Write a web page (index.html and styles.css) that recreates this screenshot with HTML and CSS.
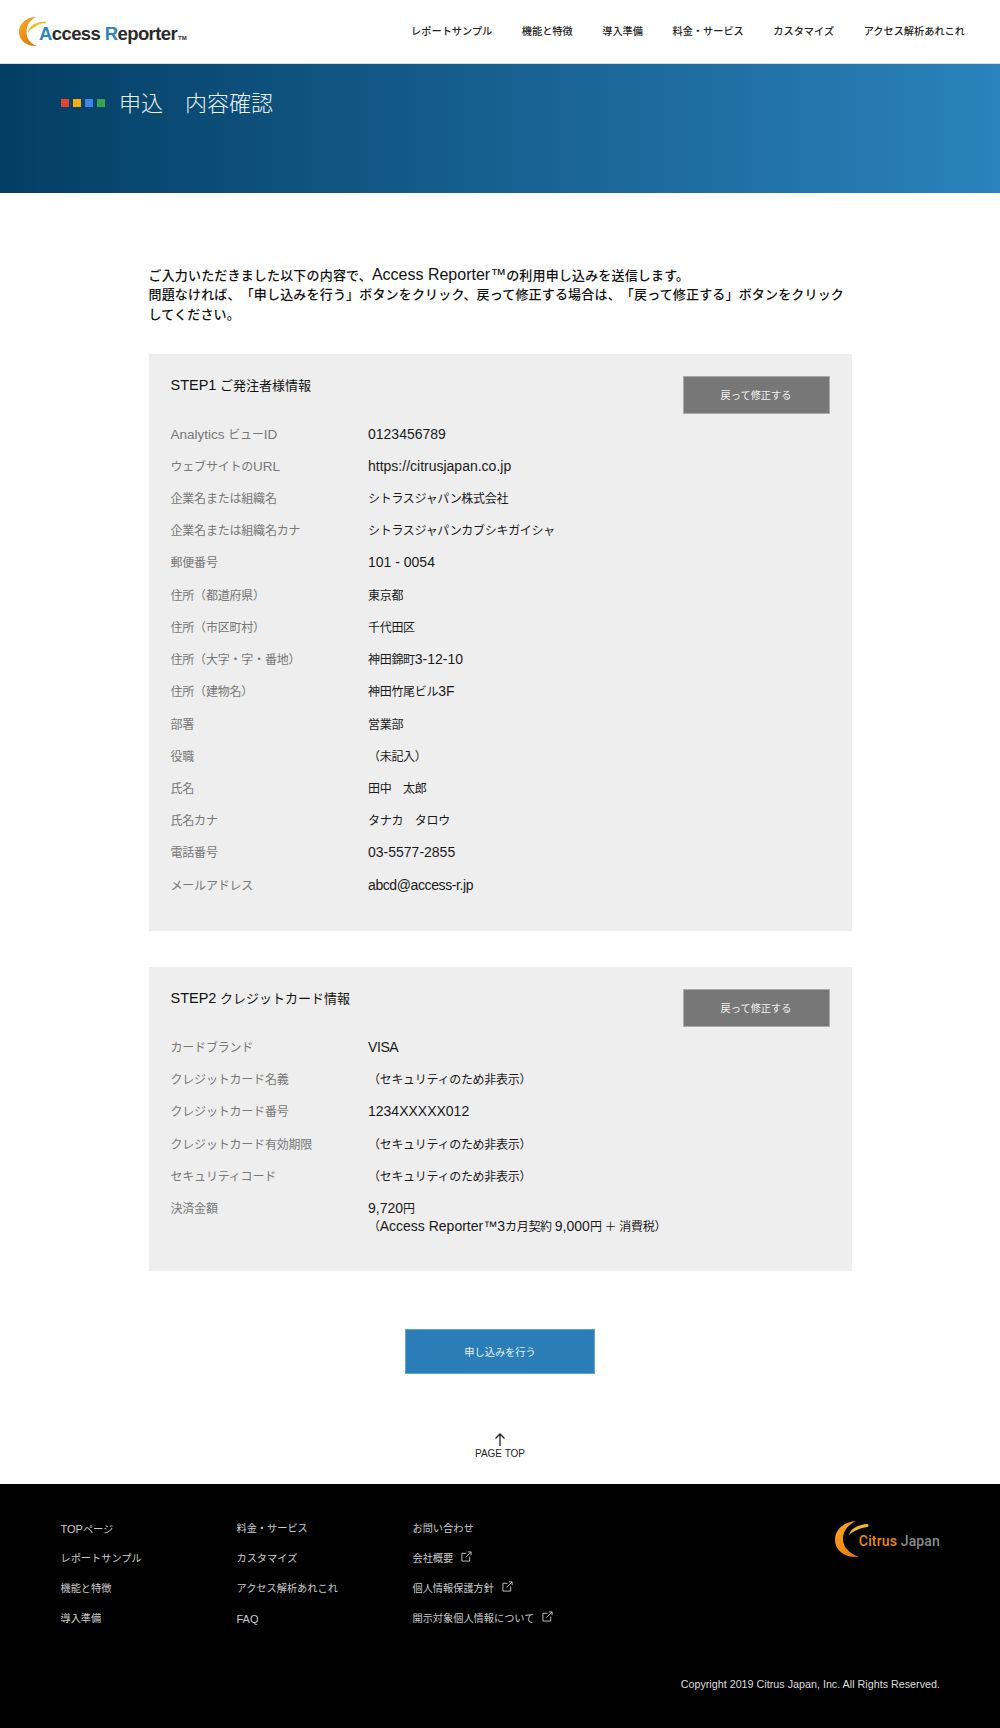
FILE: index.html
```html
<!DOCTYPE html>
<html lang="ja">
<head>
<meta charset="utf-8">
<title>申込 内容確認</title>
<link rel="stylesheet" href="styles.css">
</head>
<body>
<header class="site-header">
  <a class="brand" href="#">
    <svg class="brand-mark" viewBox="0 0 30 32" width="30" height="32">
      <defs><linearGradient id="og" x1="0.2" y1="0" x2="0.8" y2="1"><stop offset="0" stop-color="#f8a91f"/><stop offset="1" stop-color="#e5720e"/></linearGradient></defs>
      <path d="M18 1C8 1 1 8 1 16c0 8 7 14.500 18 14C12 28 8.500 22 8.500 16 8.500 9 12 4 18 1z" fill="url(#og)"/>
      <path d="M10 16c1-5 6-10 17-10.500 1.500 0 1.500 1.500 0 2-6 0-8 2-10 3.500-3 1-5 3-7 5z" fill="#f4bc22"/>
    </svg>
    <span class="brand-text"><span class="cap">A</span>ccess <span class="cap">R</span>eporter<small>TM</small></span>
  </a>
  <nav class="main-nav">
    <a href="#">レポートサンプル</a>
    <a href="#">機能と特徴</a>
    <a href="#">導入準備</a>
    <a href="#">料金・サービス</a>
    <a href="#">カスタマイズ</a>
    <a href="#">アクセス解析あれこれ</a>
  </nav>
</header>
<section class="banner">
  <div class="squares"><i class="s1"></i><i class="s2"></i><i class="s3"></i><i class="s4"></i></div>
  <h1>申込　内容確認</h1>
</section>
<main class="content">
  <p class="intro">ご入力いただきました以下の内容で、<span class="l">Access Reporter™</span>の利用申し込みを送信します。<br>問題なければ、「申し込みを行う」ボタンをクリック、戻って修正する場合は、「戻って修正する」ボタンをクリックしてください。</p>
  <section class="panel">
    <div class="panel-head"><h2><span class="l">STEP1</span> ご発注者様情報</h2><a class="back" href="#">戻って修正する</a></div>
    <dl class="rows">
      <div><dt><span class="l">Analytics </span>ビュー<span class="l">ID</span></dt><dd><span class="l">0123456789</span></dd></div>
      <div><dt>ウェブサイトの<span class="l">URL</span></dt><dd><span class="l">https://citrusjapan.co.jp</span></dd></div>
      <div><dt>企業名または組織名</dt><dd>シトラスジャパン株式会社</dd></div>
      <div><dt>企業名または組織名カナ</dt><dd>シトラスジャパンカブシキガイシャ</dd></div>
      <div><dt>郵便番号</dt><dd><span class="l">101 - 0054</span></dd></div>
      <div><dt>住所（都道府県）</dt><dd>東京都</dd></div>
      <div><dt>住所（市区町村）</dt><dd>千代田区</dd></div>
      <div><dt>住所（大字・字・番地）</dt><dd>神田錦町<span class="l">3-12-10</span></dd></div>
      <div><dt>住所（建物名）</dt><dd>神田竹尾ビル<span class="l">3F</span></dd></div>
      <div><dt>部署</dt><dd>営業部</dd></div>
      <div><dt>役職</dt><dd>（未記入）</dd></div>
      <div><dt>氏名</dt><dd>田中　太郎</dd></div>
      <div><dt>氏名カナ</dt><dd>タナカ　タロウ</dd></div>
      <div><dt>電話番号</dt><dd><span class="l">03-5577-2855</span></dd></div>
      <div><dt>メールアドレス</dt><dd><span class="l tight">abcd@access-r.jp</span></dd></div>
    </dl>
  </section>
  <section class="panel panel-pay">
    <div class="panel-head"><h2><span class="l">STEP2</span> クレジットカード情報</h2><a class="back" href="#">戻って修正する</a></div>
    <dl class="rows">
      <div><dt>カードブランド</dt><dd><span class="l tight">VISA</span></dd></div>
      <div><dt>クレジットカード名義</dt><dd>（セキュリティのため非表示）</dd></div>
      <div><dt>クレジットカード番号</dt><dd><span class="l">1234XXXXX012</span></dd></div>
      <div><dt>クレジットカード有効期限</dt><dd>（セキュリティのため非表示）</dd></div>
      <div><dt>セキュリティコード</dt><dd>（セキュリティのため非表示）</dd></div>
      <div><dt>決済金額</dt><dd><span class="l">9,720</span>円<br>（<span class="l">Access Reporter™3</span>カ月契約 <span class="l">9,000</span>円 ＋ 消費税）</dd></div>
    </dl>
  </section>
  <div class="submit-wrap"><a class="submit" href="#">申し込みを行う</a></div>
  <a class="page-top" href="#">
    <svg viewBox="0 0 12 13" width="12" height="13"><path d="M6 13V1M1.500 5.500L6 1l4.500 4.500" fill="none" stroke="#222" stroke-width="1.300"/></svg>
    <span>PAGE TOP</span>
  </a>
</main>
<footer class="site-footer">
  <div class="foot-top">
    <ul>
      <li><a href="#"><span class="f">TOP</span>ページ</a></li>
      <li><a href="#">レポートサンプル</a></li>
      <li><a href="#">機能と特徴</a></li>
      <li><a href="#">導入準備</a></li>
    </ul>
    <ul>
      <li><a href="#">料金・サービス</a></li>
      <li><a href="#">カスタマイズ</a></li>
      <li><a href="#">アクセス解析あれこれ</a></li>
      <li><a href="#"><span class="f">FAQ</span></a></li>
    </ul>
    <ul>
      <li><a href="#">お問い合わせ</a></li>
      <li><a href="#">会社概要<svg class="ext" viewBox="0 0 12 12"><path d="M6 2.500H1V11h8.500V6M5 7l6-6M7.500 1H11v3.500" fill="none" stroke="#ccc"/></svg></a></li>
      <li><a href="#">個人情報保護方針<svg class="ext" viewBox="0 0 12 12"><path d="M6 2.500H1V11h8.500V6M5 7l6-6M7.500 1H11v3.500" fill="none" stroke="#ccc"/></svg></a></li>
      <li><a href="#">開示対象個人情報について<svg class="ext" viewBox="0 0 12 12"><path d="M6 2.500H1V11h8.500V6M5 7l6-6M7.500 1H11v3.500" fill="none" stroke="#ccc"/></svg></a></li>
    </ul>
    <a class="citrus" href="#">
      <svg viewBox="0 0 34 38" width="34" height="38">
        <defs><linearGradient id="og2" x1="0.2" y1="0" x2="0.8" y2="1"><stop offset="0" stop-color="#f9a81f"/><stop offset="1" stop-color="#e9780f"/></linearGradient></defs>
        <path d="M21 1C8 2 0 10 0 20c0 10 9 18 24 17C14 33 8 27 8 19 8 11 13 5 21 1z" fill="url(#og2)"/>
        <path d="M14 15c1-5 7-10 18-11 2 0 2 3 0 3-6 1-8 2-10 3-3 1-6 3-8 5z" fill="#f5b921"/>
      </svg>
      <span class="citrus-text"><b>Citrus</b> Japan</span>
    </a>
  </div>
  <p class="copyright">Copyright 2019 Citrus Japan, Inc. All Rights Reserved.</p>
</footer>
</body>
</html>
```
FILE: styles.css
```css
* { box-sizing: border-box; }
html, body { margin: 0; padding: 0; }
body {
  font-family: "Liberation Sans", "Noto Sans CJK JP", sans-serif;
  color: #222;
  background: #fff;
  text-spacing-trim: space-all;
}
a { color: inherit; text-decoration: none; }

.site-header {
  height: 64px;
  display: flex;
  align-items: center;
  justify-content: space-between;
  padding: 0 35px 0 18px;
  border-bottom: 1px solid #d5dde2;
}
.brand { display: flex; align-items: center; }
.brand-mark { flex: none; margin-top: 0; }
.brand-text {
  margin-left: -9px;
  margin-top: 4px;
  font-size: 18.500px;
  font-weight: 700;
  letter-spacing: -.6px;
  color: #2b2b2b;
  white-space: nowrap;
}
.brand-text .cap { color: #2b85c0; }
.brand-text small { font-size: 6px; margin-left: 1px; letter-spacing: 0; }
.main-nav { display: flex; gap: 29.500px; font-size: 10.200px; font-weight: 500; margin-top: -2px; }

.banner {
  height: 129px;
  background: linear-gradient(90deg, #033e64 0%, #2b82bc 100%);
  display: flex;
  align-items: flex-start;
  padding: 25px 0 0 61px;
  color: #eaf2f8;
}
.squares { display: flex; gap: 4px; margin-top: 10px; }
.squares i { width: 8px; height: 8px; display: block; }
.s1 { background: #e8432f; }
.s2 { background: #f5ae0b; }
.s3 { background: #4285e8; }
.s4 { background: #35a54e; }
.banner h1 {
  margin: 0 0 0 14px;
  font-size: 22px;
  font-weight: 300;
  line-height: 30px;
}

.content { width: 703px; margin: 0 auto; }
.intro {
  margin: 73px 0 30px;
  font-size: 13px;
  letter-spacing: .17px;
  font-weight: 500;
  line-height: 19.400px;
  color: #111;
}
.l { font-size: 14px; line-height: 1; letter-spacing: 0; }
.l.tight { letter-spacing: -.4px; }
.intro .l { font-size: 16px; }
.panel {
  background: #eee;
  padding: 22px 22px 28px;
  margin-bottom: 36.500px;
}
.panel-pay { padding-bottom: 27px; margin-bottom: 0; }
.panel-pay .rows { margin-top: 5.600px; }
.panel-head { display: flex; justify-content: space-between; align-items: flex-start; }
.panel-head h2 { margin: 0; font-size: 13px; font-weight: 400; line-height: 20px; color: #111; }
.panel-head .l { font-size: 14.500px; }
.back {
  width: 147px;
  height: 38px;
  padding-bottom: 2px;
  background: #777;
  border: 1px solid #aaa;
  color: #f2f2f2;
  font-size: 10.200px;
  display: flex;
  align-items: center;
  justify-content: center;
}
.rows { margin: 5px 0 0; font-size: 12px; letter-spacing: -.2px; }
.rows > div { display: flex; line-height: 17.600px; padding: 7.320px 0; }
.rows dt { width: 197.500px; color: #777; flex: none; }
.rows dt .l { font-size: 13.500px; }
.rows dd { margin: 0; color: #1a1a1a; letter-spacing: -.3px; }

.submit-wrap { display: flex; justify-content: center; margin-top: 58px; }
.submit {
  width: 190px;
  height: 45px;
  background: #2a7db6;
  border: 1px solid #5ea6d6;
  color: #e8f2f9;
  font-size: 10.200px;
  display: flex;
  align-items: center;
  justify-content: center;
}
.page-top {
  display: flex;
  flex-direction: column;
  align-items: center;
  margin-top: 59px;
  padding-bottom: 23px;
  font-size: 10px;
  line-height: 14px;
  color: #222;
}
.page-top svg { display: block; margin-bottom: 1px; }

.site-footer { background: #000; height: 244px; padding: 35px 60px 0 60.500px; color: #ccc; font-size: 10.200px; }
.foot-top { display: flex; }
.foot-top ul { list-style: none; margin: 0; padding: 0; width: 176px; }
.foot-top li { height: 30px; line-height: 20px; white-space: nowrap; }
.f { font-size: 11px; }
.ext { width: 11px; height: 11px; margin-left: 7.500px; vertical-align: 0; }
.citrus { margin-left: auto; display: flex; align-items: center; height: 38px; margin-top: 1px; }
.citrus svg { margin-right: -10px; flex: none; }
.citrus-text { font-family: Roboto, "Liberation Sans", sans-serif; font-size: 14px; font-weight: 500; letter-spacing: .15px; color: #8a8a8a; margin-top: 4px; }
.citrus-text b { color: #e98a15; font-weight: 500; }
.copyright { margin: 39px 0 0; text-align: right; font-size: 10.750px; color: #ddd; }
```
